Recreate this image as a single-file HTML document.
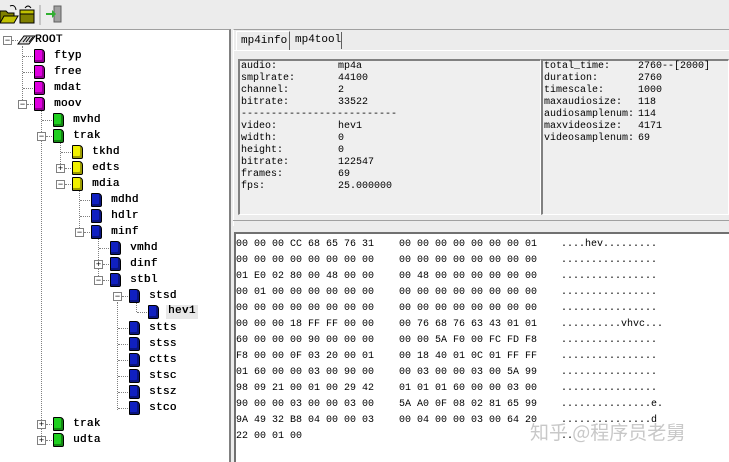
<!DOCTYPE html>
<html><head><meta charset="utf-8"><style>
*{margin:0;padding:0;box-sizing:border-box}
body{width:729px;height:462px;overflow:hidden;background:#ececec;font-family:"Liberation Mono",monospace;font-size:10px;color:#000;position:relative}
.a{position:absolute;white-space:pre;line-height:12px}
#tree{position:absolute;left:0;top:29px;width:231px;height:433px;background:#fff;border-top:1px solid #a0a0a0;border-right:2px solid #808080}
.ic{position:absolute;width:11px;height:14px;border:1px solid #000;border-radius:1px 4px 2px 1px;box-shadow:inset -2px -2px 0 rgba(0,0,0,.35)}
.t{position:absolute;font-size:11px;line-height:12px;font-weight:normal;letter-spacing:.3px;text-shadow:0.4px 0 0 #000}
.ex{position:absolute;width:9px;height:9px;border:1px solid #808080;background:#fff;font-size:9px;line-height:7px;text-align:center;color:#000;font-family:"Liberation Sans",sans-serif}
.hl{position:absolute;border-top:1px dotted #808080;width:10px}
.vl{position:absolute;border-left:1px dotted #808080}
.box{position:absolute;background:#efefef;border-top:2px solid #808080;border-left:2px solid #808080;border-bottom:1px solid #fff;border-right:1px solid #fff}
.hex{position:absolute;left:234px;top:232px;width:495px;height:230px;background:#fff;border-top:2px solid #707070;border-left:2px solid #707070}
</style></head><body>
<svg class="a" style="left:0;top:3px" width="70" height="22">
<path d="M0 8 h6 l2 2 h6 v10 h-14z" fill="#808000" stroke="#000" stroke-width="1"/>
<path d="M0 20 l4 -7 h14 l-4 7z" fill="#c0c000" stroke="#000"/>
<path d="M10 3 q5 -2 6 4" fill="none" stroke="#000"/>
<rect x="20" y="7" width="14" height="13" fill="#808000" stroke="#000"/>
<rect x="20" y="7" width="14" height="4" fill="#c0c000" stroke="#000"/>
<path d="M25 5 q3 -4 6 0" fill="none" stroke="#000"/>
<line x1="40" y1="2" x2="40" y2="22" stroke="#a0a0a0"/>
<rect x="54" y="3" width="7" height="16" fill="#a0a0a0" stroke="#606060"/>
<path d="M46 10 h6 v-3 l4 4 l-4 4 v-3 h-6z" fill="#30b030"/>
</svg>
<div id="tree"></div>
<div class="vl" style="left:22px;top:46px;height:58px"></div>
<div class="vl" style="left:41px;top:110px;height:332px"></div>
<div class="vl" style="left:60px;top:142px;height:28px"></div>
<div class="vl" style="left:79px;top:190px;height:44px"></div>
<div class="vl" style="left:98px;top:238px;height:44px"></div>
<div class="vl" style="left:117px;top:302px;height:108px"></div>
<div class="vl" style="left:136px;top:302px;height:10px"></div>

<div class="ex" style="left:3px;top:36px">−</div><div class="hl" style="left:12px;top:40px;width:6px"></div>
<svg class="a" style="left:16px;top:33px" width="20" height="14"><path d="M2 11 l6 -8 h11 l-6 8z" fill="#ddd" stroke="#000"/><path d="M7 9 l4 -5 M10 9 l4 -5 M13 9 l4 -5" stroke="#000"/></svg>
<div class="t" style="left:35px;top:34px">ROOT</div>

<div class="hl" style="left:23px;top:56px"></div><div class="ic" style="left:34px;top:49px;background:#e000e0"></div><div class="t" style="left:54px;top:50px">ftyp</div>
<div class="hl" style="left:23px;top:72px"></div><div class="ic" style="left:34px;top:65px;background:#e000e0"></div><div class="t" style="left:54px;top:66px">free</div>
<div class="hl" style="left:23px;top:88px"></div><div class="ic" style="left:34px;top:81px;background:#e000e0"></div><div class="t" style="left:54px;top:82px">mdat</div>
<div class="ex" style="left:18px;top:100px">−</div><div class="hl" style="left:27px;top:104px;width:6px"></div><div class="ic" style="left:34px;top:97px;background:#e000e0"></div><div class="t" style="left:54px;top:98px">moov</div>

<div class="hl" style="left:42px;top:120px"></div><div class="ic" style="left:53px;top:113px;background:#20d020"></div><div class="t" style="left:73px;top:114px">mvhd</div>
<div class="ex" style="left:37px;top:132px">−</div><div class="hl" style="left:46px;top:136px;width:6px"></div><div class="ic" style="left:53px;top:129px;background:#20d020"></div><div class="t" style="left:73px;top:130px">trak</div>

<div class="hl" style="left:61px;top:152px"></div><div class="ic" style="left:72px;top:145px;background:#f0f000"></div><div class="t" style="left:92px;top:146px">tkhd</div>
<div class="ex" style="left:56px;top:164px">+</div><div class="hl" style="left:65px;top:168px;width:6px"></div><div class="ic" style="left:72px;top:161px;background:#f0f000"></div><div class="t" style="left:92px;top:162px">edts</div>
<div class="ex" style="left:56px;top:180px">−</div><div class="hl" style="left:65px;top:184px;width:6px"></div><div class="ic" style="left:72px;top:177px;background:#f0f000"></div><div class="t" style="left:92px;top:178px">mdia</div>

<div class="hl" style="left:80px;top:200px"></div><div class="ic" style="left:91px;top:193px;background:#1020c0"></div><div class="t" style="left:111px;top:194px">mdhd</div>
<div class="hl" style="left:80px;top:216px"></div><div class="ic" style="left:91px;top:209px;background:#1020c0"></div><div class="t" style="left:111px;top:210px">hdlr</div>
<div class="ex" style="left:75px;top:228px">−</div><div class="hl" style="left:84px;top:232px;width:6px"></div><div class="ic" style="left:91px;top:225px;background:#1020c0"></div><div class="t" style="left:111px;top:226px">minf</div>

<div class="hl" style="left:99px;top:248px"></div><div class="ic" style="left:110px;top:241px;background:#1020c0"></div><div class="t" style="left:130px;top:242px">vmhd</div>
<div class="ex" style="left:94px;top:260px">+</div><div class="hl" style="left:103px;top:264px;width:6px"></div><div class="ic" style="left:110px;top:257px;background:#1020c0"></div><div class="t" style="left:130px;top:258px">dinf</div>
<div class="ex" style="left:94px;top:276px">−</div><div class="hl" style="left:103px;top:280px;width:6px"></div><div class="ic" style="left:110px;top:273px;background:#1020c0"></div><div class="t" style="left:130px;top:274px">stbl</div>

<div class="ex" style="left:113px;top:292px">−</div><div class="hl" style="left:122px;top:296px;width:6px"></div><div class="ic" style="left:129px;top:289px;background:#1020c0"></div><div class="t" style="left:149px;top:290px">stsd</div>
<div class="hl" style="left:137px;top:312px"></div><div class="ic" style="left:148px;top:305px;background:#1020c0"></div><div class="t" style="left:166px;top:305px;background:#e8e8e8;padding:0 2px;height:14px;line-height:13px">hev1</div>
<div class="hl" style="left:118px;top:328px"></div><div class="ic" style="left:129px;top:321px;background:#1020c0"></div><div class="t" style="left:149px;top:322px">stts</div>
<div class="hl" style="left:118px;top:344px"></div><div class="ic" style="left:129px;top:337px;background:#1020c0"></div><div class="t" style="left:149px;top:338px">stss</div>
<div class="hl" style="left:118px;top:360px"></div><div class="ic" style="left:129px;top:353px;background:#1020c0"></div><div class="t" style="left:149px;top:354px">ctts</div>
<div class="hl" style="left:118px;top:376px"></div><div class="ic" style="left:129px;top:369px;background:#1020c0"></div><div class="t" style="left:149px;top:370px">stsc</div>
<div class="hl" style="left:118px;top:392px"></div><div class="ic" style="left:129px;top:385px;background:#1020c0"></div><div class="t" style="left:149px;top:386px">stsz</div>
<div class="hl" style="left:118px;top:408px"></div><div class="ic" style="left:129px;top:401px;background:#1020c0"></div><div class="t" style="left:149px;top:402px">stco</div>

<div class="ex" style="left:37px;top:420px">+</div><div class="hl" style="left:46px;top:424px;width:6px"></div><div class="ic" style="left:53px;top:417px;background:#20d020"></div><div class="t" style="left:73px;top:418px">trak</div>
<div class="ex" style="left:37px;top:436px">+</div><div class="hl" style="left:46px;top:440px;width:6px"></div><div class="ic" style="left:53px;top:433px;background:#20d020"></div><div class="t" style="left:73px;top:434px">udta</div>

<div style="position:absolute;left:233px;top:29px;width:496px;height:197px;border-top:1px solid #a0a0a0;border-left:1px solid #fff"></div>
<div style="position:absolute;left:236px;top:31px;width:54px;height:19px;border:1px solid #fff;border-right:1px solid #606060;border-bottom:none;background:#ececec"></div>
<div class="a" style="left:241px;top:35px;font-size:11px">mp4info</div>
<div style="position:absolute;left:291px;top:32px;width:51px;height:17px;border-right:1px solid #606060"></div>
<div class="a" style="left:295px;top:34px;font-size:11px">mp4tool</div>
<div style="position:absolute;left:233px;top:50px;width:496px;border-top:1px solid #fff"></div>

<div class="box" style="left:238px;top:59px;width:303px;height:156px"></div>
<div class="box" style="left:541px;top:59px;width:188px;height:156px"></div>
<div class="a" style="left:241px;top:61px">audio:
smplrate:
channel:
bitrate:
--------------------------
video:
width:
height:
bitrate:
frames:
fps:</div>
<div class="a" style="left:338px;top:61px">mp4a
44100
2
33522

hev1
0
0
122547
69
25.000000</div>
<div class="a" style="left:544px;top:61px">total_time:
duration:
timescale:
maxaudiosize:
audiosamplenum:
maxvideosize:
videosamplenum:</div>
<div class="a" style="left:638px;top:61px">2760--[2000]
2760
1000
118
114
4171
69</div>
<div style="position:absolute;left:233px;top:220px;width:496px;border-top:1px solid #a0a0a0"></div>

<div class="hex"></div>
<div class="a" style="left:236px;top:237px;line-height:16px">00 00 00 CC 68 65 76 31
00 00 00 00 00 00 00 00
01 E0 02 80 00 48 00 00
00 01 00 00 00 00 00 00
00 00 00 00 00 00 00 00
00 00 00 18 FF FF 00 00
60 00 00 00 90 00 00 00
F8 00 00 0F 03 20 00 01
01 60 00 00 03 00 90 00
98 09 21 00 01 00 29 42
90 00 00 03 00 00 03 00
9A 49 32 B8 04 00 00 03
22 00 01 00</div>
<div class="a" style="left:399px;top:237px;line-height:16px">00 00 00 00 00 00 00 01
00 00 00 00 00 00 00 00
00 48 00 00 00 00 00 00
00 00 00 00 00 00 00 00
00 00 00 00 00 00 00 00
00 76 68 76 63 43 01 01
00 00 5A F0 00 FC FD F8
00 18 40 01 0C 01 FF FF
00 03 00 00 03 00 5A 99
01 01 01 60 00 00 03 00
5A A0 0F 08 02 81 65 99
00 04 00 00 03 00 64 20</div>
<div class="a" style="left:561px;top:237px;line-height:16px">....hev.........
................
................
................
................
..........vhvc...
................
................
................
................
...............e.
...............d
..</div>
<div class="a" style="left:530px;top:420px;font-family:'Noto Sans CJK SC',sans-serif;font-size:19px;line-height:24px;color:#c8c8c8">知乎 @程序员老舅</div>
</body></html>
